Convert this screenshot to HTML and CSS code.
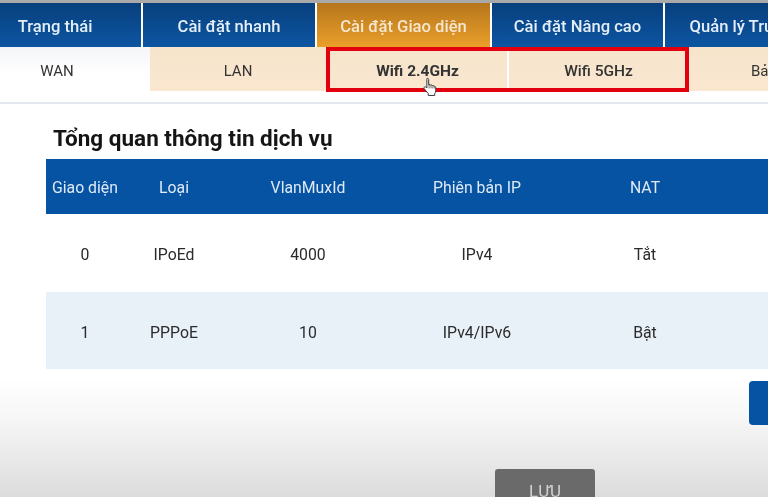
FILE: index.html
```html
<!DOCTYPE html>
<html lang="vi">
<head>
<meta charset="utf-8">
<title>Cài đặt Giao diện</title>
<link rel="stylesheet" href="styles.css">
</head>
<body>
<div class="page">
  <nav class="tabs">
    <a class="tab tab-1">Trạng thái</a>
    <a class="tab tab-2">Cài đặt nhanh</a>
    <a class="tab tab-3 active">Cài đặt Giao diện</a>
    <a class="tab tab-4">Cài đặt Nâng cao</a>
    <a class="tab tab-5">Quản lý Truy cập</a>
  </nav>
  <nav class="subtabs">
    <a class="sub sub-wan">WAN</a>
    <a class="sub sub-lan">LAN</a>
    <a class="sub sub-w24">Wifi 2.4GHz</a>
    <a class="sub sub-w5">Wifi 5GHz</a>
    <a class="sub sub-more">Bảo mật</a>
    <div class="redframe"></div>
    <svg class="cursor" viewBox="0 0 18 22" width="16" height="20">
      <path d="M5.5 1.5c1-.6 2 0 2 1v6l.5-.2c.8-.3 1.6 0 1.8.6.8-.4 1.7-.1 2 .6.8-.4 1.8 0 2 .8.8-.2 1.7.3 1.7 1.300v3.400c0 1.600-.7 2.600-1.200 3.400v2.100H7v-2l-4.400-5.400c-.6-.8-.4-1.700.3-2.100.7-.4 1.500-.2 2 .4l.6.7V2.500c0-.4 0-.8 0-1z" fill="#fff" stroke="#333" stroke-width="1.100" stroke-linejoin="round"/>
      <path d="M8 8.500v4M10.200 9v3.500M12.300 9.700v3M14.300 10.700v2" fill="none" stroke="#333" stroke-width=".8"/>
    </svg>
  </nav>
  <div class="rule"></div>
  <main class="content">
    <h1 class="title">Tổng quan thông tin dịch vụ</h1>
    <table class="services">
      <colgroup>
        <col class="c1"><col class="c2"><col class="c3"><col class="c4"><col class="c5"><col class="c6">
      </colgroup>
      <thead>
        <tr><th>Giao diện</th><th>Loại</th><th>VlanMuxId</th><th>Phiên bản IP</th><th>NAT</th><th></th></tr>
      </thead>
      <tbody>
        <tr><td>0</td><td>IPoEd</td><td>4000</td><td>IPv4</td><td>Tắt</td><td></td></tr>
        <tr class="alt"><td>1</td><td>PPPoE</td><td>10</td><td>IPv4/IPv6</td><td>Bật</td><td></td></tr>
      </tbody>
    </table>
    <div class="add-row"><button class="blue-btn" type="button"></button></div>
    <div class="save-row"><button class="save-btn" type="button">LƯU</button></div>
  </main>
</div>
</body>
</html>
```
FILE: styles.css
```css
* { box-sizing: border-box; }
html, body { margin: 0; padding: 0; height: 100%; overflow: hidden; }
body {
  font-family: Roboto, "Liberation Sans", sans-serif;
  color: #333;
  background: #fff;
}
.page {
  width: 768px;
  height: 497px;
  overflow: hidden;
  filter: blur(0.4px);
  background: linear-gradient(to bottom, #fff 0, #fff 378px, #f6f6f6 420px, #dcdcdc 497px);
}
.tabs {
  display: flex;
  gap: 2px;
  width: 900px;
  height: 47px;
  padding-top: 3px;
  background: linear-gradient(to bottom, #a9a9a9 0, #a9a9a9 3px, #fff 3px);
}
.tab {
  display: flex;
  align-items: center;
  justify-content: center;
  height: 44px;
  padding-top: 2px;
  font-size: 16.6px;
  font-weight: 500;
  color: #e4eef7;
  white-space: nowrap;
  background: linear-gradient(to bottom, #083f7d 0, #0c55a2 100%);
}
.tab-1 { flex: 0 0 141px; padding-right: 31px; }
.tab-2 { flex: 0 0 172px; }
.tab-3 { flex: 0 0 173px; }
.tab-4 { flex: 0 0 171px; }
.tab-5 { flex: 0 0 172px; }
.tab.active {
  color: #f4e6cf;
  background: linear-gradient(to bottom, #b5761c 0, #eb9f2a 100%);
}
.subtabs {
  position: relative;
  display: flex;
  width: 900px;
  height: 44px;
  background: linear-gradient(to bottom, #f3f5f8 0, #fff 60%);
}
.sub {
  display: flex;
  align-items: center;
  justify-content: center;
  height: 44px;
  padding-top: 4px;
  font-size: 15px;
  color: #333;
  background: linear-gradient(to bottom, #f6e4cb 0, #fbe7d0 100%);
}
.sub-wan { flex: 0 0 150px; padding-right: 36px; background: none; }
.sub-lan { flex: 0 0 176px; }
.sub-w24 { flex: 0 0 183px; padding-left: 2px; font-size: 15.5px; font-weight: 700; border-right: 2px solid #fff; }
.sub-w5 { flex: 0 0 181px; padding-right: 2px; font-size: 15.5px; font-weight: 500; }
.sub-more { flex: 0 0 178px; }
.redframe {
  position: absolute;
  left: 326px;
  top: 0;
  width: 363px;
  height: 45px;
  border: 4px solid #e2000f;
  pointer-events: none;
}
.cursor {
  position: absolute;
  left: 422px;
  top: 30px;
}
.rule {
  height: 13px;
  border-bottom: 2px solid #e4e9ef;
}
.content {
  padding-left: 46px;
}
.title {
  margin: 0;
  padding: 18px 0 0 7px;
  height: 55px;
  font-size: 22.5px;
  line-height: 32px;
  font-weight: 700;
  color: #151515;
  white-space: nowrap;
}
.services {
  width: 780px;
  table-layout: fixed;
  border-collapse: collapse;
  font-size: 15.8px;
  text-align: center;
}
.c1 { width: 78px; }
.c2 { width: 100px; }
.c3 { width: 168px; }
.c4 { width: 170px; }
.c5 { width: 166px; }
.c6 { width: 98px; }
.services th {
  height: 55px;
  padding: 1px 0 0;
  font-weight: 400;
  color: #dfeaf5;
  background: #0753a3;
}
.services td {
  height: 77px;
  padding: 3px 0 0;
  color: #2b2b2b;
}
.services tbody tr:first-child td { height: 78px; }
.services .alt td { background: #e8f0f8; }
.add-row {
  display: flex;
  justify-content: flex-start;
  padding: 12px 0 0 703px;
}
.blue-btn {
  flex: none;
  width: 100px;
  height: 44px;
  border: 0;
  border-radius: 4px;
  background: #0753a3;
}
.save-row {
  padding: 44px 0 0 449px;
}
.save-btn {
  display: block;
  width: 100px;
  height: 44px;
  padding: 0;
  border: 0;
  border-radius: 3px;
  font-family: inherit;
  font-size: 17px;
  color: #d0d0d0;
  background: #6a6a6a;
}
```
